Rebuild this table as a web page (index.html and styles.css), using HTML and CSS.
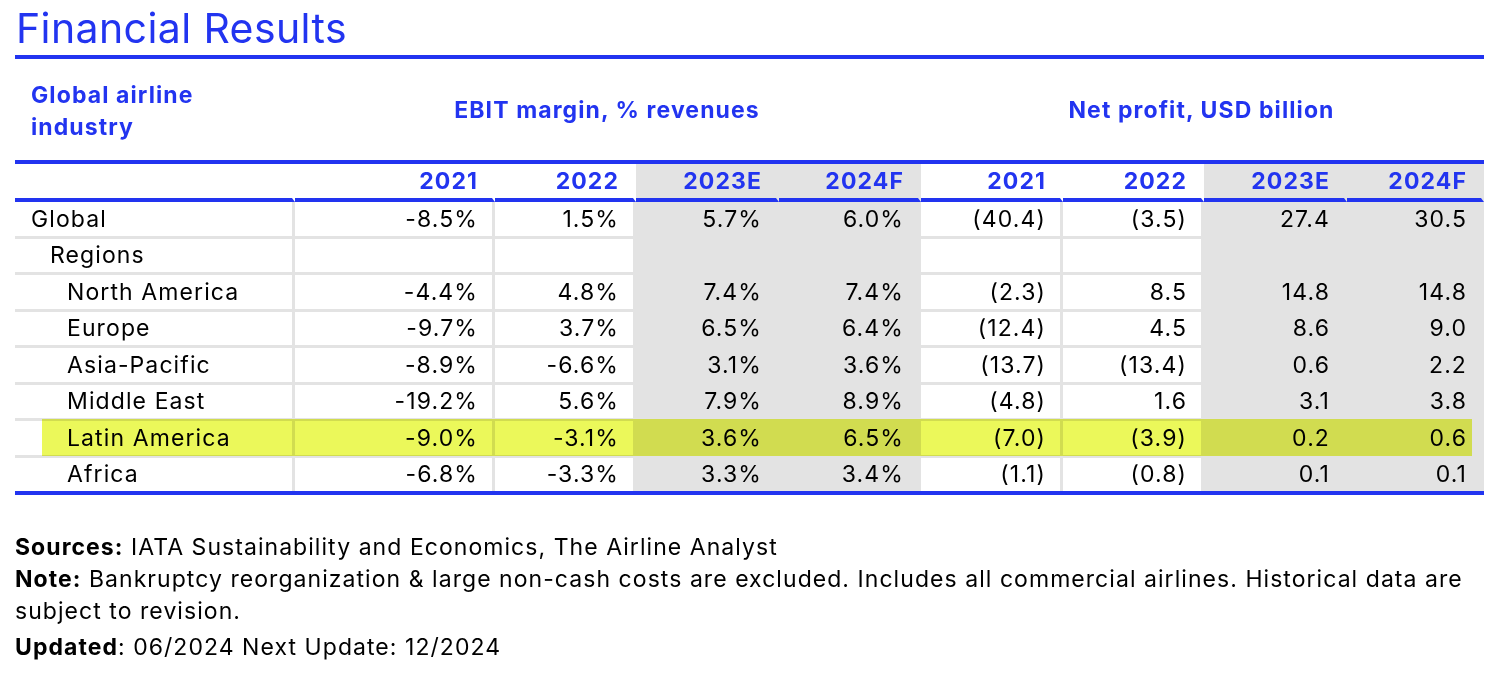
FILE: index.html
```html
<!DOCTYPE html>
<html lang="en">
<head>
<meta charset="utf-8">
<title>Financial Results</title>
<link rel="stylesheet" href="styles.css">
</head>
<body>
<div class="page">
  <h1 class="title">Financial Results</h1>
  <div class="fin">
    <div class="h-corner">Global airline<br>industry</div>
    <div class="h-group h-ebit">EBIT margin, % revenues</div>
    <div class="h-group">Net profit, USD billion</div>

    <div class="yr"></div>
    <div class="yr">2021</div>
    <div class="yr">2022</div>
    <div class="yr shade">2023E</div>
    <div class="yr shade">2024F</div>
    <div class="yr">2021</div>
    <div class="yr">2022</div>
    <div class="yr shade">2023E</div>
    <div class="yr shade">2024F</div>

    <div class="lbl l0">Global</div>
    <div class="num">-8.5%</div><div class="num">1.5%</div><div class="num shade">5.7%</div><div class="num shade">6.0%</div>
    <div class="num">(40.4)</div><div class="num">(3.5)</div><div class="num shade">27.4</div><div class="num shade">30.5</div>

    <div class="lbl l1">Regions</div>
    <div class="num"></div><div class="num"></div><div class="num shade"></div><div class="num shade"></div>
    <div class="num"></div><div class="num"></div><div class="num shade"></div><div class="num shade"></div>

    <div class="lbl l2">North America</div>
    <div class="num">-4.4%</div><div class="num">4.8%</div><div class="num shade">7.4%</div><div class="num shade">7.4%</div>
    <div class="num">(2.3)</div><div class="num">8.5</div><div class="num shade">14.8</div><div class="num shade">14.8</div>

    <div class="lbl l2">Europe</div>
    <div class="num">-9.7%</div><div class="num">3.7%</div><div class="num shade">6.5%</div><div class="num shade">6.4%</div>
    <div class="num">(12.4)</div><div class="num">4.5</div><div class="num shade">8.6</div><div class="num shade">9.0</div>

    <div class="lbl l2">Asia-Pacific</div>
    <div class="num">-8.9%</div><div class="num">-6.6%</div><div class="num shade">3.1%</div><div class="num shade">3.6%</div>
    <div class="num">(13.7)</div><div class="num">(13.4)</div><div class="num shade">0.6</div><div class="num shade">2.2</div>

    <div class="lbl l2">Middle East</div>
    <div class="num">-19.2%</div><div class="num">5.6%</div><div class="num shade">7.9%</div><div class="num shade">8.9%</div>
    <div class="num">(4.8)</div><div class="num">1.6</div><div class="num shade">3.1</div><div class="num shade">3.8</div>

    <div class="lbl l2">Latin America</div>
    <div class="num">-9.0%</div><div class="num">-3.1%</div><div class="num shade">3.6%</div><div class="num shade">6.5%</div>
    <div class="num">(7.0)</div><div class="num">(3.9)</div><div class="num shade">0.2</div><div class="num shade">0.6</div>

    <div class="lbl l2 last">Africa</div>
    <div class="num last">-6.8%</div><div class="num last">-3.3%</div><div class="num shade last">3.3%</div><div class="num shade last">3.4%</div>
    <div class="num last">(1.1)</div><div class="num last">(0.8)</div><div class="num shade last">0.1</div><div class="num shade last">0.1</div>

    <div class="highlight"></div>
  </div>

  <div class="notes">
    <p><b>Sources:</b> IATA Sustainability and Economics, The Airline Analyst</p>
    <p><b>Note:</b> Bankruptcy reorganization &amp; large non-cash costs are excluded. Includes all commercial airlines. Historical data are subject to revision.</p>
    <p class="updated"><b>Updated</b>: 06/2024 Next Update: 12/2024</p>
  </div>
</div>
</body>
</html>
```

FILE: styles.css
```css
:root {
  --blue: #2234f0;
  --sep: #e3e3e3;
  --ink: #000;
}

* { box-sizing: border-box; }

html, body {
  margin: 0;
  padding: 0;
  background: #fff;
}

body {
  font-family: Inter, "Liberation Sans", sans-serif;
  color: var(--ink);
}

.page {
  padding: 0 0 0 15px;
}

.title {
  margin: 3px 0 2px 1px;
  font-size: 41px;
  font-weight: 400;
  line-height: 50px;
  color: var(--blue);
  letter-spacing: 0.4px;
}

.fin {
  position: relative;
  display: grid;
  width: 1469px;
  grid-template-columns: 280px 200px 141px 143px 142px 142px 141px 143px 137px;
  border-top: 4px solid var(--blue);
  border-bottom: 4px solid var(--blue);
  font-size: 23px;
  letter-spacing: 1.1px;
}

.h-corner,
.h-group {
  height: 105px;
  border-bottom: 4px solid var(--blue);
  color: var(--blue);
  font-weight: 700;
  display: flex;
  align-items: center;
}

.h-corner {
  padding: 3px 0 0 16px;
  line-height: 32px;
}

.h-group {
  grid-column: span 4;
  justify-content: center;
  padding-right: 2px;
}

.yr {
  height: 38px;
  border-bottom: 4px solid var(--blue);
  border-right: 3px solid transparent;
  padding-right: 14px;
  color: var(--blue);
  font-weight: 700;
  display: flex;
  align-items: center;
  justify-content: flex-end;
}

.lbl,
.num {
  height: 36.5px;
  border-right: 3px solid var(--sep);
  border-bottom: 3px solid var(--sep);
  display: flex;
  align-items: center;
}

.num {
  justify-content: flex-end;
  padding-right: 14px;
}

.last {
  height: 33.5px;
  border-bottom: 0;
}

.shade {
  background: var(--sep);
}

.l0 { padding-left: 16px; }
.l1 { padding-left: 35px; }
.l2 { padding-left: 52px; }

.highlight {
  position: absolute;
  left: 27px;
  top: 360px;
  width: 1430px;
  height: 37px;
  background: #ebf85a;
  mix-blend-mode: multiply;
  pointer-events: none;
}

.notes {
  margin-top: 36px;
  width: 1475px;
  font-size: 23px;
  line-height: 32px;
  letter-spacing: 1.05px;
}

.notes p {
  margin: 0;
}

.notes .updated {
  margin-top: 4px;
}
```
